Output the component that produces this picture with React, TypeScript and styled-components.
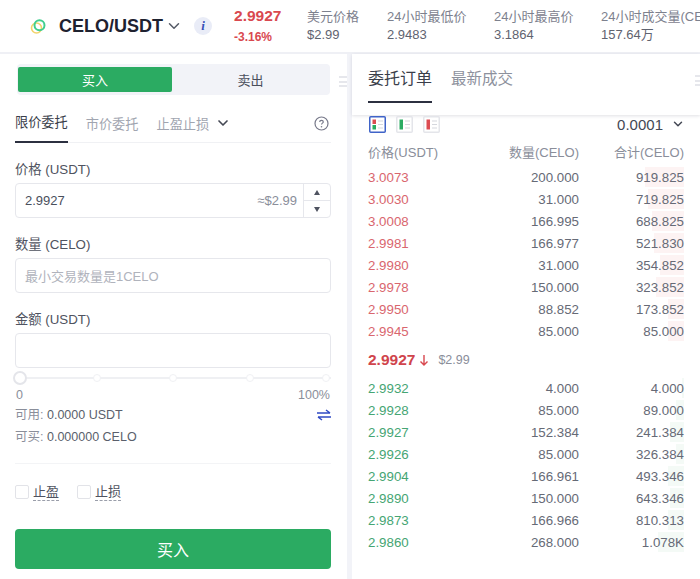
import styled, { createGlobalStyle } from "styled-components";
import { ChevronDown } from "lucide-react";

const GlobalStyle = createGlobalStyle`
  html, body {
    margin: 0;
    padding: 0;
    background: #fff;
    overflow: hidden;
  }
  * {
    box-sizing: border-box;
  }
  body {
    font-family: "Liberation Sans", "Noto Sans CJK SC", sans-serif;
    color: #4a4f5c;
  }
`;

const Page = styled.div`
  width: 700px;
  height: 579px;
  overflow: hidden;
  display: flex;
  flex-direction: column;
`;

const Header = styled.header`
  height: 54px;
  flex: none;
  display: flex;
  align-items: center;
  padding-left: 30px;
  border-bottom: 2px solid #eff0f5;
  white-space: nowrap;
  overflow: hidden;

  & > * {
    flex: none;
  }
`;

const Pair = styled.div`
  margin-left: 12px;
  font-size: 18px;
  font-weight: 700;
  color: #1e2230;
`;

const PairCaret = styled(ChevronDown)`
  margin-left: 2px;
  color: #555a66;
`;

const InfoBadge = styled.span`
  margin-left: 11px;
  width: 18px;
  height: 18px;
  border-radius: 50%;
  background: #e9ecf7;
  color: #3550b8;
  font: italic 700 13px "Liberation Serif", serif;
  display: flex;
  align-items: center;
  justify-content: center;
`;

const PriceBlock = styled.div`
  margin-left: 22px;
  width: 73px;
  color: #d9484f;
  font-weight: 700;
`;

const LastPrice = styled.div`
  font-size: 15.5px;
  line-height: 19px;
`;

const Change = styled.div`
  font-size: 12px;
  line-height: 17px;
  margin-top: 4px;
`;

const Stat = styled.div<{ $width: number }>`
  width: ${({ $width }) => $width}px;
  font-size: 13px;
  line-height: 18px;
  color: #7d818e;
`;

const StatValue = styled.div`
  color: #5f6370;
`;

const Body = styled.div`
  flex: 1;
  display: flex;
  min-height: 0;
`;

const TradePanel = styled.section`
  width: 347px;
  flex: none;
  padding: 10px 16px 0 15px;
  position: relative;
`;

const Grip = styled.span<{ $top: number; $right: number }>`
  position: absolute;
  top: ${({ $top }) => $top}px;
  right: ${({ $right }) => $right}px;
  width: 8px;
  height: 11px;
  border-top: 2px solid #e6e7ec;
  border-bottom: 2px solid #e6e7ec;

  &::after {
    content: "";
    display: block;
    margin-top: 2.5px;
    height: 2px;
    background: #e6e7ec;
  }
`;

const Gutter = styled.div`
  width: 5px;
  flex: none;
  background: #f2f3f8;
`;

const SideSwitch = styled.div`
  height: 31px;
  margin: 0 1px 0 2px;
  padding: 3px 1px;
  display: flex;
  background: #f2f3f8;
  border-radius: 4px;
`;

const SideButton = styled.div<{ $active?: boolean }>`
  flex: ${({ $active }) => ($active ? "0 0 154px" : "1")};
  display: flex;
  align-items: center;
  justify-content: center;
  font-size: 13px;
  border-radius: 2px;
  color: ${({ $active }) => ($active ? "#fff" : "#4a4f5c")};
  background: ${({ $active }) => ($active ? "#2bab62" : "transparent")};
`;

const OrderTabs = styled.div`
  height: 48px;
  display: flex;
  align-items: center;
  gap: 18px;
  border-bottom: 1px solid #f0f1f4;
  font-size: 13.2px;
  color: #a1a5b0;
  padding-top: 9px;
`;

const ActiveOrderTab = styled.span`
  color: #3a3e4a;
  height: 39px;
  line-height: 38px;
  border-bottom: 2px solid #2c3040;
  margin-bottom: -1px;
  align-self: flex-end;
`;

const DropdownTab = styled.span`
  display: flex;
  align-items: center;
  gap: 6px;
  color: #a1a5b0;

  svg {
    color: #444854;
  }
`;

const HelpIcon = styled.svg`
  margin-left: auto;
  margin-right: 2px;
  flex: none;
`;

const Label = styled.div`
  margin-top: 18px;
  font-size: 13.3px;
  line-height: 18px;
  color: #4f5360;
`;

const Field = styled.div`
  height: 35px;
  margin-top: 4px;
  border: 1px solid #e6e7ec;
  border-radius: 4px;
  display: flex;
  align-items: center;
  padding-left: 9px;
  font-size: 13px;
  background: #fff;
`;

const Placeholder = styled.span`
  color: #b0b3bc;
`;

const Approx = styled.span`
  margin-left: auto;
  margin-right: 6px;
  color: #8a8e9a;
`;

const Stepper = styled.div`
  width: 27px;
  height: 100%;
  border-left: 1px solid #e6e7ec;
  display: flex;
  flex-direction: column;
`;

const StepButton = styled.div<{ $down?: boolean }>`
  flex: 1;
  display: flex;
  align-items: center;
  justify-content: center;
  border-top: ${({ $down }) => ($down ? "1px solid #e6e7ec" : "none")};

  &::before {
    content: "";
    border-left: 3.5px solid transparent;
    border-right: 3.5px solid transparent;
    ${({ $down }) =>
      $down ? "border-top: 5px solid #4f5360;" : "border-bottom: 5px solid #4f5360;"}
  }
`;

const Slider = styled.div`
  height: 20px;
  margin: 0 -2px;
  display: flex;
  align-items: center;
  justify-content: space-between;
  position: relative;

  &::before {
    content: "";
    position: absolute;
    left: 2px;
    right: 2px;
    top: 9px;
    height: 2px;
    background: #eff0f3;
  }
`;

const SliderStop = styled.span`
  width: 14px;
  height: 14px;
  display: flex;
  align-items: center;
  justify-content: center;
  position: relative;
`;

const SliderDot = styled.span<{ $handle?: boolean }>`
  width: ${({ $handle }) => ($handle ? 14 : 8)}px;
  height: ${({ $handle }) => ($handle ? 14 : 8)}px;
  border-radius: 50%;
  background: #fff;
  border: ${({ $handle }) => ($handle ? "2px solid #e4e5ea" : "1px solid #f0f1f4")};
`;

const SliderScale = styled.div`
  display: flex;
  justify-content: space-between;
  margin-top: -2px;
  font-size: 12.5px;
  line-height: 18px;
  color: #8a8e9a;
  padding: 0 1px;
`;

const BalanceRow = styled.div<{ $top: number }>`
  display: flex;
  align-items: center;
  justify-content: space-between;
  margin-top: ${({ $top }) => $top}px;
  font-size: 12.5px;
  line-height: 18px;
  color: #5a5f6c;
`;

const Muted = styled.span`
  color: #8a8e9a;
`;

const Divider = styled.div`
  height: 1px;
  margin-top: 17px;
  background: #f3f4f6;
`;

const Checks = styled.div`
  display: flex;
  align-items: center;
  gap: 18px;
  margin-top: 19px;
  height: 18px;
`;

const Check = styled.label`
  display: flex;
  align-items: center;
  gap: 4px;
  font-size: 13px;
  color: #4f5360;
`;

const CheckBox = styled.span`
  width: 14px;
  height: 14px;
  border: 1px solid #e2e3e8;
  border-radius: 2px;
`;

const Dashed = styled.span`
  line-height: 16px;
  border-bottom: 1px dashed #9a9eaa;
`;

const SubmitButton = styled.button`
  display: block;
  width: 100%;
  height: 40px;
  margin-top: 28px;
  border: 0;
  border-radius: 4px;
  background: #2bab62;
  color: #fff;
  font: 16px "Liberation Sans", "Noto Sans CJK SC", sans-serif;
`;

const BookPanel = styled.section`
  flex: 1;
  min-width: 0;
  position: relative;
`;

const BookTabs = styled.div`
  height: 61px;
  display: flex;
  gap: 19px;
  padding-left: 16px;
  box-shadow: 0 1px 3px rgba(60, 65, 90, 0.16);
`;

const BookTab = styled.span<{ $active?: boolean }>`
  height: 49px;
  line-height: 50px;
  font-size: ${({ $active }) => ($active ? 16 : 15.5)}px;
  color: ${({ $active }) => ($active ? "#3a3e4a" : "#8d919d")};
  border-bottom: 2px solid ${({ $active }) => ($active ? "#2c3040" : "transparent")};
`;

const BookTools = styled.div`
  height: 18px;
  padding: 0 15px 0 17px;
  display: flex;
  align-items: center;
  gap: 10px;
`;

const Precision = styled.span`
  margin-left: auto;
  display: flex;
  align-items: center;
  gap: 8px;
  font-size: 15px;
  color: #444854;
`;

const BookColumns = styled.div`
  display: grid;
  grid-template-columns: 1fr 96px 105px;
  padding: 0 16px;
  margin: 11px 0 4px;
  font-size: 13px;
  line-height: 18px;
  color: #8a8e9a;
  text-align: right;

  span:first-child {
    text-align: left;
  }
`;

const Row = styled.div`
  position: relative;
  height: 22px;
  display: grid;
  grid-template-columns: 1fr 96px 105px;
  align-items: center;
  padding: 0 16px;
  font-size: 13.3px;
  color: #666a76;
  text-align: right;
`;

const Depth = styled.span<{ $side: "ask" | "bid" }>`
  position: absolute;
  top: 1px;
  bottom: 1px;
  right: 16px;
  background: ${({ $side }) => ($side === "ask" ? "#fdf3f3" : "#f4faf6")};
`;

const RowPrice = styled.span<{ $side: "ask" | "bid" }>`
  position: relative;
  text-align: left;
  color: ${({ $side }) => ($side === "ask" ? "#d9666e" : "#45a573")};
`;

const RowCell = styled.span`
  position: relative;
`;

const Mid = styled.div`
  height: 35px;
  display: flex;
  align-items: center;
  padding-left: 16px;
  gap: 4px;
`;

const MidPrice = styled.span`
  color: #d0444c;
  font-size: 15.5px;
  font-weight: 700;
`;

const MidFiat = styled.span`
  margin-left: 5px;
  font-size: 12.5px;
  color: #8a8e9a;
`;

const CeloLogo = () => (
  <svg width="17" height="17" viewBox="0 0 17 17" fill="none">
    <circle cx="6.5" cy="10" r="5" stroke="#f2d36b" strokeWidth="1.6" />
    <circle cx="9.5" cy="7.2" r="5" stroke="#3fcf8e" strokeWidth="2" />
  </svg>
);

const BookIcon = ({ mode, active }: { mode: "both" | "bid" | "ask"; active?: boolean }) => (
  <svg width="17" height="17" viewBox="0 0 17 17" fill="none">
    <rect
      x="0.75"
      y="0.75"
      width="15.5"
      height="15.5"
      rx="1"
      fill="#fff"
      stroke={active ? "#3f63c8" : "#e4e5ea"}
      strokeWidth="1.5"
    />
    <path d="M9 5h5M9 8.5h5M9 12h5" stroke="#d5d7dd" strokeWidth="1" />
    {mode === "both" && (
      <>
        <rect x="3.5" y="3.5" width="3.5" height="4.5" fill="#dc4c52" />
        <rect x="3.5" y="9" width="3.5" height="4.5" fill="#2bab62" />
      </>
    )}
    {mode === "bid" && <rect x="3.5" y="3.5" width="3.5" height="10" fill="#2bab62" />}
    {mode === "ask" && <rect x="3.5" y="3.5" width="3.5" height="10" fill="#dc4c52" />}
  </svg>
);

const asks = [
  ["3.0073", "200.000", "919.825", 39],
  ["3.0030", "31.000", "719.825", 36],
  ["3.0008", "166.995", "688.825", 32],
  ["2.9981", "166.977", "521.830", 30],
  ["2.9980", "31.000", "354.852", 24],
  ["2.9978", "150.000", "323.852", 28],
  ["2.9950", "88.852", "173.852", 16],
  ["2.9945", "85.000", "85.000", 16],
] as const;

const bids = [
  ["2.9932", "4.000", "4.000", 2],
  ["2.9928", "85.000", "89.000", 8],
  ["2.9927", "152.384", "241.384", 14],
  ["2.9926", "85.000", "326.384", 8],
  ["2.9904", "166.961", "493.346", 16],
  ["2.9890", "150.000", "643.346", 14],
  ["2.9873", "166.966", "810.313", 16],
  ["2.9860", "268.000", "1.078K", 26],
] as const;

const BookRows = ({
  side,
  rows,
}: {
  side: "ask" | "bid";
  rows: readonly (readonly [string, string, string, number])[];
}) => (
  <>
    {rows.map(([price, amount, total, depth]) => (
      <Row key={price}>
        <Depth $side={side} style={{ width: depth }} />
        <RowPrice $side={side}>{price}</RowPrice>
        <RowCell>{amount}</RowCell>
        <RowCell>{total}</RowCell>
      </Row>
    ))}
  </>
);

export default function App() {
  return (
    <Page>
      <GlobalStyle />
      <Header>
        <CeloLogo />
        <Pair>CELO/USDT</Pair>
        <PairCaret size={18} strokeWidth={2} />
        <InfoBadge>i</InfoBadge>
        <PriceBlock>
          <LastPrice>2.9927</LastPrice>
          <Change>-3.16%</Change>
        </PriceBlock>
        <Stat $width={80}>
          美元价格
          <StatValue>$2.99</StatValue>
        </Stat>
        <Stat $width={107}>
          24小时最低价
          <StatValue>2.9483</StatValue>
        </Stat>
        <Stat $width={107}>
          24小时最高价
          <StatValue>3.1864</StatValue>
        </Stat>
        <Stat $width={120}>
          24小时成交量(CELO)
          <StatValue>157.64万</StatValue>
        </Stat>
      </Header>
      <Body>
        <TradePanel>
          <Grip $top={22} $right={0} />
          <SideSwitch>
            <SideButton $active>买入</SideButton>
            <SideButton>卖出</SideButton>
          </SideSwitch>
          <OrderTabs>
            <ActiveOrderTab>限价委托</ActiveOrderTab>
            <span>市价委托</span>
            <DropdownTab>
              止盈止损
              <ChevronDown size={16} strokeWidth={2.5} />
            </DropdownTab>
            <HelpIcon width="15" height="15" viewBox="0 0 15 15" fill="none">
              <circle cx="7.5" cy="7.5" r="6.5" stroke="#77798a" strokeWidth="1.2" />
              <path
                d="M5.7 6c0-1 .8-1.7 1.8-1.7s1.8.7 1.8 1.6c0 1.2-1.8 1.3-1.8 2.7"
                stroke="#77798a"
                strokeWidth="1.2"
              />
              <circle cx="7.5" cy="10.8" r="0.8" fill="#77798a" />
            </HelpIcon>
          </OrderTabs>
          <Label>价格 (USDT)</Label>
          <Field>
            2.9927
            <Approx>≈$2.99</Approx>
            <Stepper>
              <StepButton />
              <StepButton $down />
            </Stepper>
          </Field>
          <Label>数量 (CELO)</Label>
          <Field>
            <Placeholder>最小交易数量是1CELO</Placeholder>
          </Field>
          <Label>金额 (USDT)</Label>
          <Field />
          <Slider>
            <SliderStop>
              <SliderDot $handle />
            </SliderStop>
            <SliderStop>
              <SliderDot />
            </SliderStop>
            <SliderStop>
              <SliderDot />
            </SliderStop>
            <SliderStop>
              <SliderDot />
            </SliderStop>
            <SliderStop>
              <SliderDot />
            </SliderStop>
          </Slider>
          <SliderScale>
            <span>0</span>
            <span>100%</span>
          </SliderScale>
          <BalanceRow $top={2}>
            <span>
              <Muted>可用:</Muted> 0.0000 USDT
            </span>
            <svg width="14" height="12" viewBox="0 0 14 12" fill="none">
              <path
                d="M0 4h13M9 1l4 3M14 8H1M5 11L1 8"
                stroke="#2f4ac4"
                strokeWidth="1.5"
              />
            </svg>
          </BalanceRow>
          <BalanceRow $top={4}>
            <span>
              <Muted>可买:</Muted> 0.000000 CELO
            </span>
          </BalanceRow>
          <Divider />
          <Checks>
            <Check>
              <CheckBox />
              <Dashed>止盈</Dashed>
            </Check>
            <Check>
              <CheckBox />
              <Dashed>止损</Dashed>
            </Check>
          </Checks>
          <SubmitButton>买入</SubmitButton>
        </TradePanel>
        <Gutter />
        <BookPanel>
          <BookTabs>
            <BookTab $active>委托订单</BookTab>
            <BookTab>最新成交</BookTab>
          </BookTabs>
          <Grip $top={21} $right={-3} />
          <BookTools>
            <BookIcon mode="both" active />
            <BookIcon mode="bid" />
            <BookIcon mode="ask" />
            <Precision>
              0.0001
              <ChevronDown size={14} strokeWidth={2.5} />
            </Precision>
          </BookTools>
          <BookColumns>
            <span>价格(USDT)</span>
            <span>数量(CELO)</span>
            <span>合计(CELO)</span>
          </BookColumns>
          <BookRows side="ask" rows={asks} />
          <Mid>
            <MidPrice>2.9927</MidPrice>
            <svg width="10" height="12" viewBox="0 0 10 12" fill="none">
              <path d="M5 1v10M1.5 7.5L5 11l3.5-3.5" stroke="#d8484f" strokeWidth="1.4" />
            </svg>
            <MidFiat>$2.99</MidFiat>
          </Mid>
          <BookRows side="bid" rows={bids} />
        </BookPanel>
      </Body>
    </Page>
  );
}
